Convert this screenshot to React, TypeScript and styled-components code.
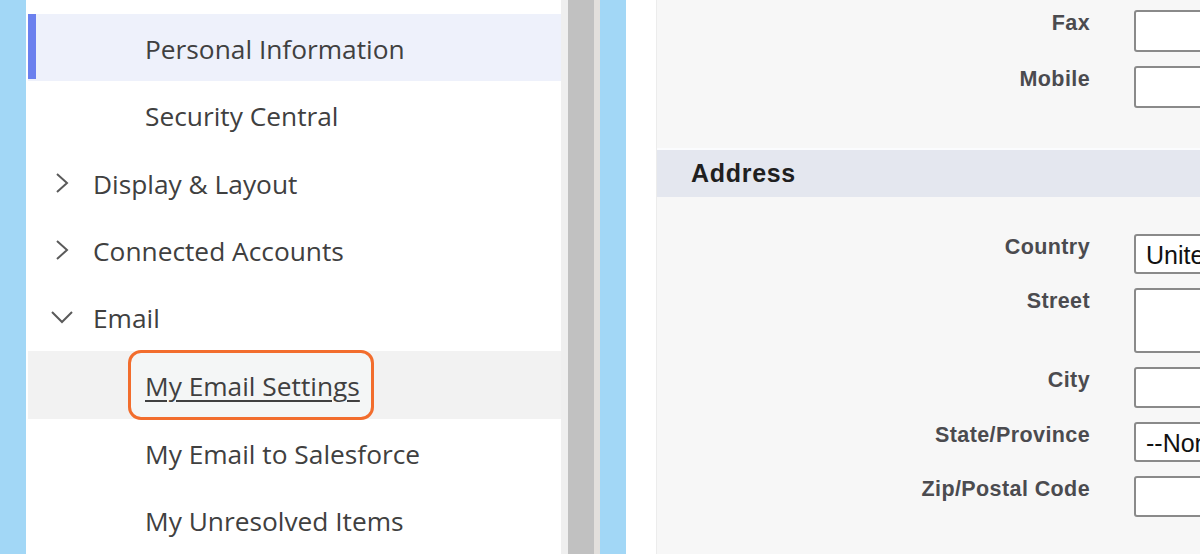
import styled, { createGlobalStyle } from "styled-components";

const GlobalStyle = createGlobalStyle`
  html, body {
    margin: 0;
    padding: 0;
    background: #ffffff;
    overflow: hidden;
  }
`;

const Page = styled.div`
  display: flex;
  width: 1200px;
  height: 554px;
  overflow: hidden;
  background: #ffffff;
`;

const BlueStrip = styled.div`
  flex: 0 0 26px;
  background: #a2d7f6;
`;

const Sidebar = styled.nav`
  flex: 0 0 535px;
  display: flex;
  flex-direction: column;
  padding-top: 14px;
  background: #ffffff;
  font-family: "Open Sans", "Noto Sans", sans-serif;
`;

const NavRow = styled.div<{ $active?: boolean; $current?: boolean }>`
  position: relative;
  display: flex;
  align-items: center;
  height: 68px;
  margin-left: 2px;
  background: ${(p) => (p.$active ? "#eef1fb" : p.$current ? "#f2f2f2" : "transparent")};
  ${(p) =>
    p.$active &&
    `&::before {
      content: "";
      position: absolute;
      left: 0;
      top: 0;
      bottom: 2px;
      width: 8px;
      background: #6b80ee;
    }`}
`;

const ChevronSlot = styled.span`
  display: flex;
  align-items: center;
  justify-content: center;
  width: 26px;
  margin-left: 21px;
  margin-right: 18px;
  color: #5a5a5a;
`;

const NavText = styled.span<{ $sub?: boolean; $link?: boolean }>`
  margin-left: ${(p) => (p.$sub ? "117px" : "0")};
  padding-top: 2px;
  font-size: 26.3px;
  color: #404040;
  white-space: nowrap;
  text-decoration: ${(p) => (p.$link ? "underline" : "none")};
  text-underline-offset: 4px;
  text-decoration-thickness: 1.5px;
`;

const Callout = styled.span`
  box-sizing: border-box;
  display: flex;
  align-items: center;
  margin-left: 100px;
  padding: 0 11px 0 14px;
  height: 70px;
  border: 3px solid #f26d2d;
  border-radius: 13px;
  background: #f4f6f6;
`;

const Splitter = styled.div`
  flex: 0 0 39px;
  display: flex;
`;

const SplitEdge = styled.div<{ $w: number; $c: string }>`
  flex: 0 0 ${(p) => p.$w}px;
  background: ${(p) => p.$c};
`;

const Spacer = styled.div`
  flex: 0 0 30px;
  background: #ffffff;
`;

const Panel = styled.section`
  flex: 1;
  background: #f7f7f7;
  border-left: 1px solid #ececec;
  font-family: "Liberation Sans", Arial, sans-serif;
  padding-top: 10px;
`;

const FieldGrid = styled.div`
  display: grid;
  grid-template-columns: 433px 1fr;
  column-gap: 44px;
  row-gap: 14px;
  align-items: start;
`;

const Label = styled.label`
  justify-self: end;
  padding-top: 1px;
  font-size: 21.5px;
  letter-spacing: 0.4px;
  line-height: 24px;
  font-weight: bold;
  color: #4b4b4f;
  white-space: nowrap;
`;

const Field = styled.div<{ $h?: number }>`
  box-sizing: border-box;
  width: 300px;
  height: ${(p) => p.$h ?? 41}px;
  background: #ffffff;
  border: 2px solid #8a8a8a;
  border-radius: 3px;
  padding: 5px 10px;
  font-size: 25px;
  line-height: 28px;
  color: #111111;
  white-space: nowrap;
  overflow: hidden;
`;

const SectionHeader = styled.h3`
  margin: 40px 0 37px;
  height: 47px;
  display: flex;
  align-items: center;
  padding-left: 34px;
  background: #e4e7ef;
  border-top: 2px solid #fbfcfe;
  font-size: 25px;
  font-weight: bold;
  letter-spacing: 0.7px;
  color: #1f1f1f;
`;

const ChevronRight = () => (
  <svg width="14" height="22" viewBox="0 0 14 22" fill="none">
    <polyline points="2,2 12,11 2,20" stroke="currentColor" strokeWidth="2" />
  </svg>
);

const ChevronDown = () => (
  <svg width="24" height="14" viewBox="0 0 24 14" fill="none">
    <polyline points="2,2 12,12 22,2" stroke="currentColor" strokeWidth="2" />
  </svg>
);

const contactFields = [
  { label: "Fax", value: "", h: 42 },
  { label: "Mobile", value: "", h: 42 },
];

const addressFields = [
  { label: "Country", value: "United States", h: 40 },
  { label: "Street", value: "", h: 65 },
  { label: "City", value: "", h: 41 },
  { label: "State/Province", value: "--None--", h: 40 },
  { label: "Zip/Postal Code", value: "", h: 41 },
];

const FieldRows = ({ fields }: { fields: { label: string; value: string; h: number }[] }) => (
  <FieldGrid>
    {fields.flatMap((f) => [
      <Label key={f.label + "-label"}>{f.label}</Label>,
      <Field key={f.label + "-field"} $h={f.h}>
        {f.value}
      </Field>,
    ])}
  </FieldGrid>
);

export default function App() {
  return (
    <Page>
      <GlobalStyle />
      <BlueStrip />
      <Sidebar>
        <NavRow $active>
          <NavText $sub>Personal Information</NavText>
        </NavRow>
        <NavRow>
          <NavText $sub>Security Central</NavText>
        </NavRow>
        <NavRow>
          <ChevronSlot>
            <ChevronRight />
          </ChevronSlot>
          <NavText>Display &amp; Layout</NavText>
        </NavRow>
        <NavRow>
          <ChevronSlot>
            <ChevronRight />
          </ChevronSlot>
          <NavText>Connected Accounts</NavText>
        </NavRow>
        <NavRow>
          <ChevronSlot>
            <ChevronDown />
          </ChevronSlot>
          <NavText>Email</NavText>
        </NavRow>
        <NavRow $current>
          <Callout>
            <NavText $link>My Email Settings</NavText>
          </Callout>
        </NavRow>
        <NavRow>
          <NavText $sub>My Email to Salesforce</NavText>
        </NavRow>
        <NavRow>
          <NavText $sub>My Unresolved Items</NavText>
        </NavRow>
      </Sidebar>
      <Splitter>
        <SplitEdge $w={7} $c="#efefef" />
        <SplitEdge $w={26} $c="#c1c1c1" />
        <SplitEdge $w={6} $c="#e2dfdc" />
      </Splitter>
      <BlueStrip />
      <Spacer />
      <Panel>
        <FieldRows fields={contactFields} />
        <SectionHeader>Address</SectionHeader>
        <FieldRows fields={addressFields} />
      </Panel>
    </Page>
  );
}
